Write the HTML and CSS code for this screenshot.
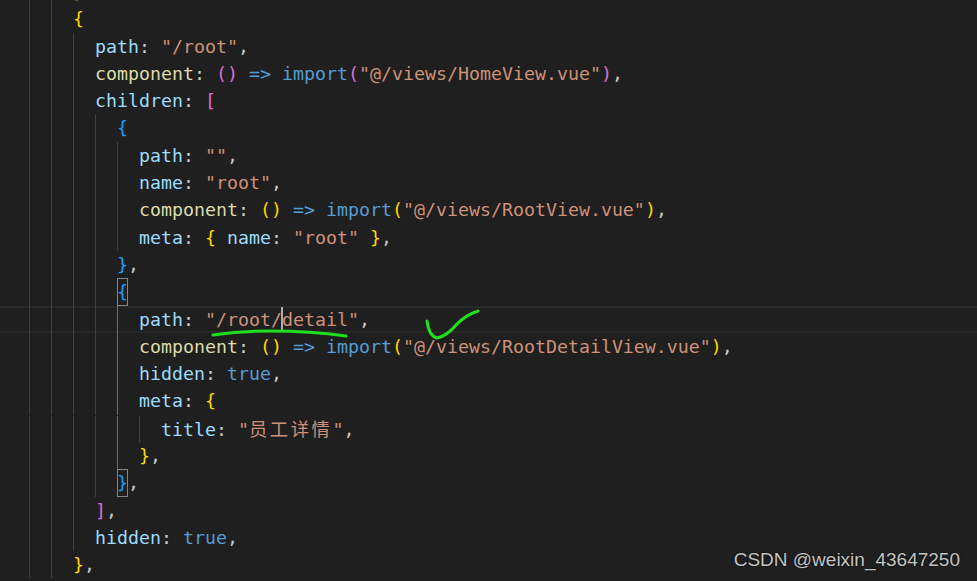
FILE: index.html
```html
<!DOCTYPE html>
<html lang="en">
<head>
    <meta charset="UTF-8" />
    <meta name="viewport" content="width=device-width, initial-scale=1.0"/>
    <title>router.js</title>
    <link rel="stylesheet" href="styles.css">
</head>
<body>
    <div class="editor">
        <div class="line"><span class="ind">    </span><span class="b1">}</span>,</div>
        <div class="line"><span class="ind">    </span><span class="b1">{</span></div>
        <div class="line"><span class="ind">      </span><span class="p">path</span>: <span class="s">"/root"</span>,</div>
        <div class="line"><span class="ind">      </span><span class="f">component</span>: <span class="b2">()</span> <span class="k">=&gt;</span> <span class="k">import</span><span class="b2">(</span><span class="s">"@/views/HomeView.vue"</span><span class="b2">)</span>,</div>
        <div class="line"><span class="ind">      </span><span class="p">children</span>: <span class="b2">[</span></div>
        <div class="line"><span class="ind">        </span><span class="b3">{</span></div>
        <div class="line"><span class="ind">          </span><span class="p">path</span>: <span class="s">""</span>,</div>
        <div class="line"><span class="ind">          </span><span class="p">name</span>: <span class="s">"root"</span>,</div>
        <div class="line"><span class="ind">          </span><span class="f">component</span>: <span class="b1">()</span> <span class="k">=&gt;</span> <span class="k">import</span><span class="b1">(</span><span class="s">"@/views/RootView.vue"</span><span class="b1">)</span>,</div>
        <div class="line"><span class="ind">          </span><span class="p">meta</span>: <span class="b1">{</span> <span class="p">name</span>: <span class="s">"root"</span> <span class="b1">}</span>,</div>
        <div class="line"><span class="ind">        </span><span class="b3">}</span>,</div>
        <div class="line"><span class="ind">        </span><span class="b3 match">{</span></div>
        <div class="line current"><span class="ind act">          </span><span class="p">path</span>: <span class="s">"/root/<span class="cursor"></span>detail"</span>,</div>
        <div class="line"><span class="ind act">          </span><span class="f">component</span>: <span class="b1">()</span> <span class="k">=&gt;</span> <span class="k">import</span><span class="b1">(</span><span class="s">"@/views/RootDetailView.vue"</span><span class="b1">)</span>,</div>
        <div class="line"><span class="ind act">          </span><span class="p">hidden</span>: <span class="k">true</span>,</div>
        <div class="line"><span class="ind act">          </span><span class="p">meta</span>: <span class="b1">{</span></div>
        <div class="line"><span class="ind act">            </span><span class="p">title</span>: <span class="s">"<span class="cjk">员工详情</span>"</span>,</div>
        <div class="line"><span class="ind act">          </span><span class="b1">}</span>,</div>
        <div class="line"><span class="ind">        </span><span class="b3 match">}</span>,</div>
        <div class="line"><span class="ind">      </span><span class="b2">]</span>,</div>
        <div class="line"><span class="ind">      </span><span class="p">hidden</span>: <span class="k">true</span>,</div>
        <div class="line"><span class="ind">    </span><span class="b1">}</span>,</div>
    </div>

    <!-- hand-drawn marks -->
    <svg class="marks" width="977" height="581" viewBox="0 0 977 581">
        <path d="M213 335 Q240 331 270 331 Q310 331 346 336" />
        <path d="M427 321 Q429 336 437 338 Q447 336 457 324 Q466 315 478 311" />
    </svg>

    <div class="watermark">CSDN @weixin_43647250</div>
</body>
</html>
```

FILE: styles.css
```css
body {
    margin: 0;
    padding: 0;
    background-color: #1f1f1f;
    color: #cccccc;
    height: 581px;
    overflow: hidden;
    position: relative;
}

.editor {
    margin-top: -22px;
    font-family: "DejaVu Sans Mono", "Noto Sans CJK SC", monospace;
    font-size: 18.27px;
    line-height: 27.3px;
}

.line {
    padding-left: 29px;
    white-space: pre;
    height: 27.3px;
}

.line.current {
    box-shadow: inset 0 2px #282828, inset 0 -2px #282828;
}

/* indent guides every 2 columns */
.ind {
    display: inline-block;
    background: repeating-linear-gradient(to right, #404040 0 1px, transparent 1px 22px);
}

.ind.act {
    background:
        linear-gradient(#6e6e6e, #6e6e6e) 88px 0 / 1px 100% no-repeat,
        repeating-linear-gradient(to right, #404040 0 1px, transparent 1px 22px);
}

.p { color: #9cdcfe; }
.f { color: #dcdcaa; }
.s { color: #ce9178; }
.k { color: #569cd6; }

.b1 { color: #ffd700; }
.b2 { color: #da70d6; }
.b3 { color: #179fff; }

.match {
    display: inline-block;
    box-shadow: inset 0 0 0 1px #858585;
}

.cursor {
    display: inline-block;
    width: 2px;
    height: 25px;
    margin: 0 -1px;
    background: #aeafad;
    vertical-align: -6px;
}

.cjk {
    font-family: "Noto Sans CJK SC", sans-serif;
    letter-spacing: 2.6px;
}

.marks {
    position: absolute;
    top: 0;
    left: 0;
    pointer-events: none;
}

.marks path {
    fill: none;
    stroke: #1ee01e;
    stroke-width: 3;
    stroke-linecap: round;
}

.watermark {
    position: absolute;
    right: 17px;
    bottom: 10px;
    font-family: "Liberation Sans", Arial, sans-serif;
    font-size: 19px;
    color: #c4c4c4;
    text-shadow: 0 0 2px #000;
}
```
